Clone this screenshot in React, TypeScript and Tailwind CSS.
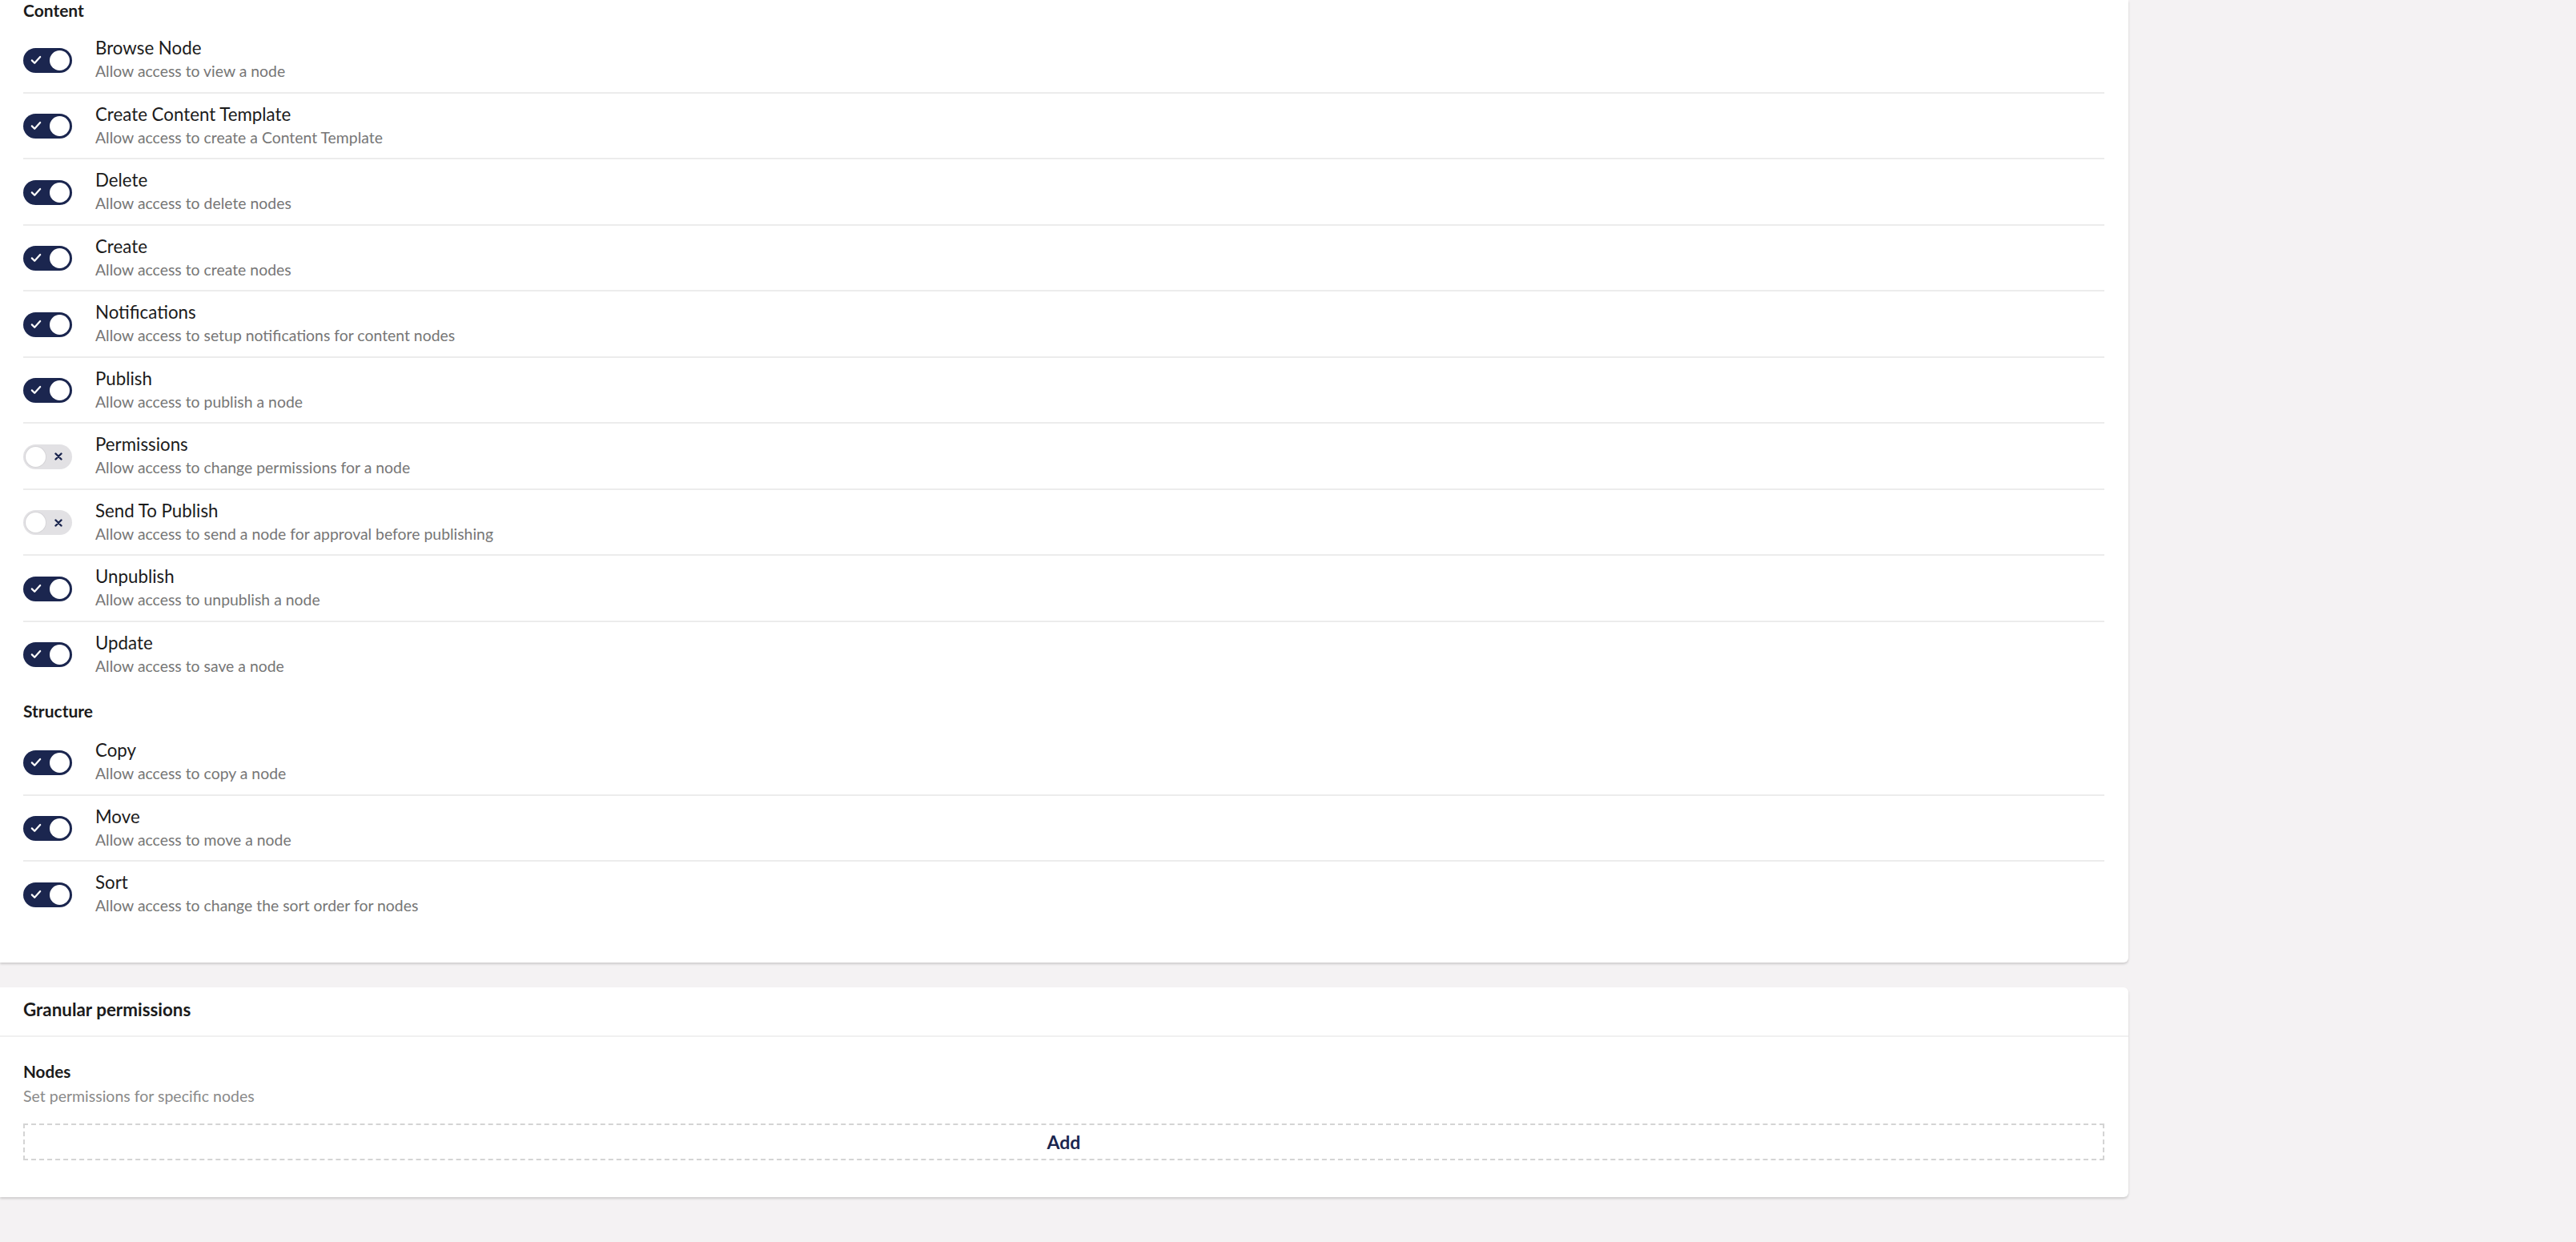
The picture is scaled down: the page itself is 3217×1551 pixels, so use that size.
import React, { useState } from "react";

type Permission = {
  id: string;
  name: string;
  description: string;
  allowed: boolean;
};

const contentPermissions: Permission[] = [
  { id: "browse", name: "Browse Node", description: "Allow access to view a node", allowed: true },
  { id: "template", name: "Create Content Template", description: "Allow access to create a Content Template", allowed: true },
  { id: "delete", name: "Delete", description: "Allow access to delete nodes", allowed: true },
  { id: "create", name: "Create", description: "Allow access to create nodes", allowed: true },
  { id: "notify", name: "Notifications", description: "Allow access to setup notifications for content nodes", allowed: true },
  { id: "publish", name: "Publish", description: "Allow access to publish a node", allowed: true },
  { id: "perms", name: "Permissions", description: "Allow access to change permissions for a node", allowed: false },
  { id: "send", name: "Send To Publish", description: "Allow access to send a node for approval before publishing", allowed: false },
  { id: "unpublish", name: "Unpublish", description: "Allow access to unpublish a node", allowed: true },
  { id: "update", name: "Update", description: "Allow access to save a node", allowed: true },
];

const structurePermissions: Permission[] = [
  { id: "copy", name: "Copy", description: "Allow access to copy a node", allowed: true },
  { id: "move", name: "Move", description: "Allow access to move a node", allowed: true },
  { id: "sort", name: "Sort", description: "Allow access to change the sort order for nodes", allowed: true },
];

function Toggle({ checked, onChange }: { checked: boolean; onChange: () => void }) {
  return (
    <button
      type="button"
      onClick={onChange}
      className={
        "relative w-[61px] h-[31px] shrink-0 rounded-full transition-colors " +
        (checked ? "bg-[#1b264f]" : "bg-[#e2e1e4]")
      }
    >
      {checked ? (
        <svg className="absolute left-[9px] top-[9px]" width="14" height="12" viewBox="0 0 14 12" fill="none">
          <path d="M1.8 6.4 L5.2 9.8 L12.2 2" stroke="white" strokeWidth="2.2" strokeLinecap="round" strokeLinejoin="round" />
        </svg>
      ) : (
        <svg className="absolute right-[12px] top-[10.5px]" width="10" height="10" viewBox="0 0 10 10" fill="none">
          <path d="M1.5 1.5 L8.5 8.5 M8.5 1.5 L1.5 8.5" stroke="#1b264f" strokeWidth="2.4" strokeLinecap="round" />
        </svg>
      )}
      <span
        className={
          "absolute top-[3px] w-[25px] h-[25px] rounded-full bg-white " +
          (checked ? "left-[33px]" : "left-[3px] shadow-[0_0_0_1px_#d6d5d8]")
        }
      />
    </button>
  );
}

function PermissionGroup({
  title,
  items,
  values,
  onToggle,
  first,
}: {
  title: string;
  items: Permission[];
  values: Record<string, boolean>;
  onToggle: (id: string) => void;
  first?: boolean;
}) {
  return (
    <div>
      <h3
        className={
          "text-[21px] leading-[21px] font-bold text-[#1b1b1b] " +
          (first ? "pt-[1.5px] mb-[11.5px]" : "mt-[20px] mb-[13px]")
        }
      >
        {title}
      </h3>
      <div>
        {items.map((p, i) => (
          <div
            key={p.id}
            className={
              "flex items-center gap-[29px] pt-[12px] pb-[10.5px] " +
              (i < items.length - 1 ? "border-b-2 border-[#ececec]" : "")
            }
          >
            <Toggle checked={values[p.id]} onChange={() => onToggle(p.id)} />
            <div className="flex flex-col">
              <span className="text-[22.3px] leading-[28px] text-[#1b1b1b]">{p.name}</span>
              <span className="text-[19.4px] leading-[30px] text-[#767676]">{p.description}</span>
            </div>
          </div>
        ))}
      </div>
    </div>
  );
}

export default function App() {
  const [values, setValues] = useState<Record<string, boolean>>(() => {
    const v: Record<string, boolean> = {};
    [...contentPermissions, ...structurePermissions].forEach((p) => (v[p.id] = p.allowed));
    return v;
  });

  const toggle = (id: string) => setValues((prev) => ({ ...prev, [id]: !prev[id] }));

  return (
    <div className="min-h-screen w-full bg-[#f4f2f3] font-['Lato','Noto_Sans',sans-serif] overflow-hidden">
      <div className="w-[2658px]">
        {/* Default permissions card */}
        <section className="bg-white rounded-br-[6px] shadow-[0_2px_3px_rgba(0,0,0,0.16)] pl-[29px] pr-[30px] pb-[45.5px]">
          <PermissionGroup title="Content" items={contentPermissions} values={values} onToggle={toggle} first />
          <PermissionGroup title="Structure" items={structurePermissions} values={values} onToggle={toggle} />
        </section>

        {/* Granular permissions card */}
        <section className="mt-[31px] bg-white rounded-r-[6px] shadow-[0_2px_3px_rgba(0,0,0,0.16)]">
          <div className="pl-[29px] pr-[30px] pt-[13px] pb-[17px] border-b-2 border-[#f0f0f0]">
            <h2 className="text-[22.4px] leading-[30px] font-bold text-[#1b1b1b]">Granular permissions</h2>
          </div>
          <div className="pl-[29px] pr-[30px] pt-[29px] pb-[46px]">
            <div className="text-[20.7px] leading-[28px] font-bold text-[#1b1b1b]">Nodes</div>
            <div className="mt-[2px] text-[19.5px] leading-[30px] text-[#8a8a8a]">Set permissions for specific nodes</div>
            <button
              type="button"
              className="mt-[19px] w-full h-[46px] border-2 border-dashed border-[#d4d4d4] text-[23px] font-bold text-[#1b264f] flex items-center justify-center"
            >
              Add
            </button>
          </div>
        </section>
      </div>
    </div>
  );
}
